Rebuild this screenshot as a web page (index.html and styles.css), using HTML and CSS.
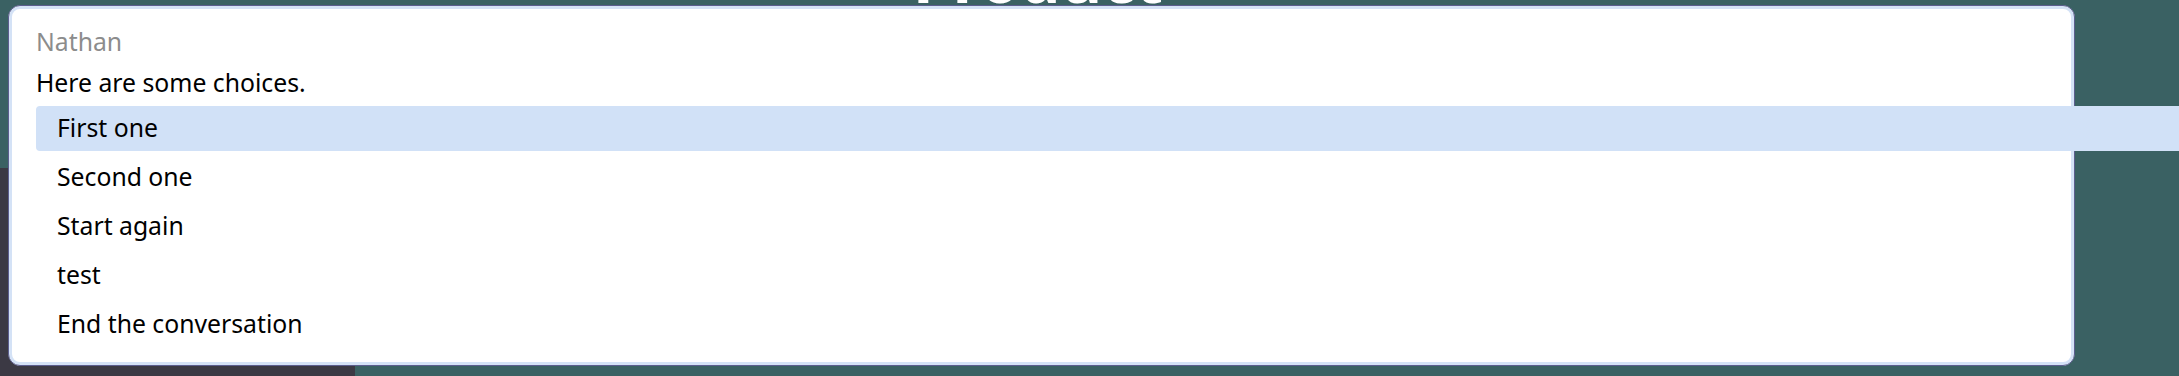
FILE: index.html
```html
<!DOCTYPE html>
<html lang="en">
<head>
<meta charset="utf-8">
<title>Dialogue</title>
<link rel="stylesheet" href="styles.css">
</head>
<body>
<div class="backdrop">
  <div class="title">Product</div>
  <div class="sidebar"></div>
</div>
<div class="dialog">
  <div class="speaker">Nathan</div>
  <div class="line">Here are some choices.</div>
  <ul class="choices">
    <li class="choice selected">First one</li>
    <li class="choice">Second one</li>
    <li class="choice">Start again</li>
    <li class="choice">test</li>
    <li class="choice">End the conversation</li>
  </ul>
</div>
</body>
</html>
```
FILE: styles.css
```css
html, body {
  margin: 0;
  padding: 0;
  height: 376px;
  overflow: hidden;
}
body {
  background: #3a6163;
  font-family: "Noto Sans", "Open Sans", sans-serif;
  font-size: 24.75px;
  color: #000;
  position: relative;
}
.backdrop {
  position: absolute;
  inset: 0;
  z-index: 0;
}
.title {
  position: absolute;
  top: -53px;
  left: 913px;
  font-size: 64px;
  line-height: 1;
  font-weight: 700;
  color: #fff;
  font-family: "Noto Sans", sans-serif;
  white-space: nowrap;
}
.sidebar {
  position: absolute;
  left: 0;
  top: 168px;
  width: 355px;
  bottom: 0;
  background: #3b3944;
}
.dialog {
  position: relative;
  z-index: 1;
  margin: 5px 0 0 8px;
  width: 2067px;
  box-sizing: border-box;
  background: #fff;
  border: 1px solid #5c5e8e;
  border-radius: 12px;
  box-shadow: inset 0 0 0 3px #d4e2f6;
  padding: 16px 24px 18px 27px;
}
.speaker {
  line-height: 40px;
  color: #8c8c8c;
}
.line {
  line-height: 40px;
  padding-top: 1px;
}
.choices {
  list-style: none;
  margin: 3px -200px 0 0;
  padding: 0;
  display: flex;
  flex-direction: column;
  gap: 4px;
}
.choice {
  height: 45px;
  box-sizing: border-box;
  display: flex;
  align-items: center;
  padding: 0 0 3px 21px;
  border-radius: 4px 0 0 4px;
}
.choice.selected {
  background: #d1e1f7;
}
```
